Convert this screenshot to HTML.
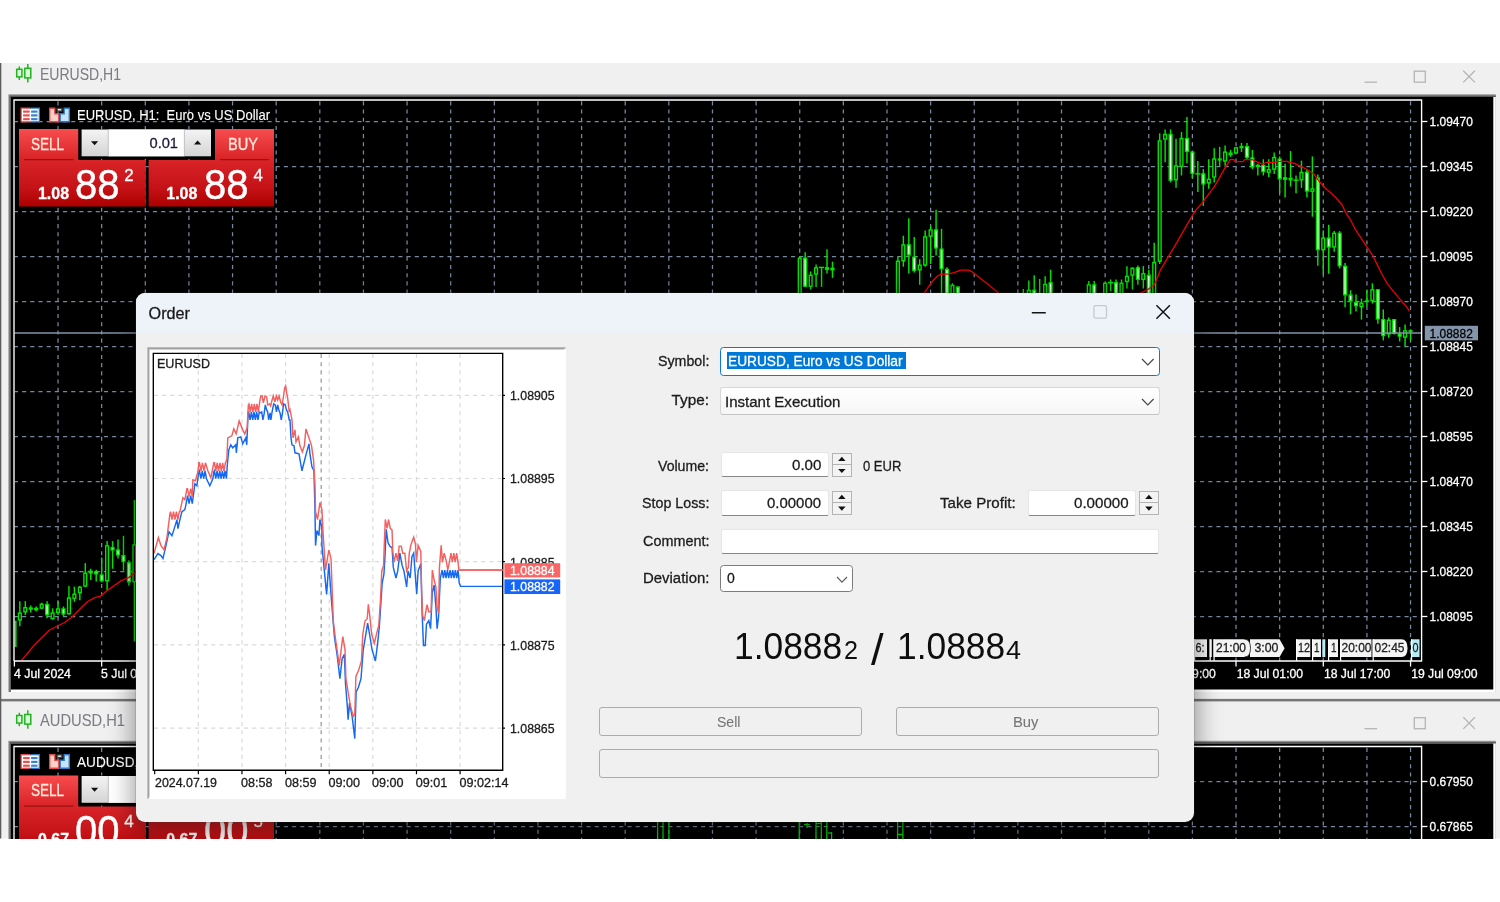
<!DOCTYPE html>
<html lang="en"><head><meta charset="utf-8"><title>Order</title>
<style>
html,body{margin:0;padding:0;background:#fff;}
body{width:1500px;height:902px;position:relative;overflow:hidden;font-family:"Liberation Sans", sans-serif;filter:blur(0.45px);}
svg text{paint-order:stroke;}

.dlg{position:absolute;left:136.1px;top:292.6px;width:1058.4px;height:529.4px;background:#f0f0f0;border-radius:9px;overflow:hidden;box-shadow:0 6px 26px 2px rgba(0,0,0,.42),0 0 0 0.8px rgba(90,90,90,.22);}
.dlg .tb{position:absolute;left:0;top:0;width:100%;height:40.3px;background:#edf3f9;}
.a{position:absolute;box-sizing:border-box;}
.t{position:absolute;white-space:nowrap;line-height:1;transform-origin:0 0;color:#1b1b1b;-webkit-text-stroke:0.3px currentColor;}
.inp{background:#fff;border:1px solid #e6e6e6;border-bottom:1.4px solid #868686;border-radius:2.5px;}
.spn{background:#f3f3f3;border:1.2px solid #b4b4b4;}
.btn{background:#f0f0f0;border:1.9px solid #acacac;border-radius:3px;}

</style></head><body>
<svg width="1500" height="902" viewBox="0 0 1500 902" style="position:absolute;left:0;top:0" font-family='"Liberation Sans", sans-serif'><rect x="0" y="0" width="1500" height="902" fill="#ffffff" /><rect x="0" y="63" width="1500" height="775.5" fill="#f0f0f0" /><rect x="0" y="55.5" width="1500" height="40.5" fill="#f0f0f0" /><line x1="19.3" y1="66.5" x2="19.3" y2="80" stroke="#1fb41f" stroke-width="1.5" /><rect x="16.7" y="69.3" width="5.2" height="7.6" fill="#d8ffd8" stroke="#1fb41f" stroke-width="1.5"/><line x1="27.8" y1="64" x2="27.8" y2="82.5" stroke="#1fb41f" stroke-width="1.5" /><rect x="24.8" y="68.3" width="6" height="9.6" fill="#d8ffd8" stroke="#1fb41f" stroke-width="1.5"/><text x="40" y="80" font-size="16.4" fill="#7c7c84" stroke="#7c7c84" stroke-width="0.05" textLength="81" lengthAdjust="spacingAndGlyphs">EURUSD,H1</text><line x1="1364.5" y1="82.2" x2="1377" y2="82.2" stroke="#b4b4b4" stroke-width="1.3" /><rect x="1414.3" y="71.2" width="11" height="11" fill="none" stroke="#b4b4b4" stroke-width="1.3"/><path d="M1463.3 70.8 l11.6 11.6 M1474.9 70.8 l-11.6 11.6" stroke="#b4b4b4" stroke-width="1.3" fill="none"/><rect x="8.4" y="94.3" width="1487.4" height="597.7" fill="#909090" /><rect x="9.6" y="95.6" width="1486.2" height="596.4" fill="#585858" /><rect x="10.8" y="97" width="1485" height="595" fill="#ffffff" /><rect x="10.8" y="97" width="1482.5" height="592.5" fill="#000000" /><line x1="58.03" y1="100" x2="58.03" y2="661" stroke="#7888a0" stroke-width="1.25" stroke-dasharray="4.09 4.09" stroke-dashoffset="6.83"/><line x1="101.66" y1="100" x2="101.66" y2="661" stroke="#7888a0" stroke-width="1.25" stroke-dasharray="4.09 4.09" stroke-dashoffset="6.83"/><line x1="145.29" y1="100" x2="145.29" y2="661" stroke="#7888a0" stroke-width="1.25" stroke-dasharray="4.09 4.09" stroke-dashoffset="6.83"/><line x1="188.92" y1="100" x2="188.92" y2="661" stroke="#7888a0" stroke-width="1.25" stroke-dasharray="4.09 4.09" stroke-dashoffset="6.83"/><line x1="232.55" y1="100" x2="232.55" y2="661" stroke="#7888a0" stroke-width="1.25" stroke-dasharray="4.09 4.09" stroke-dashoffset="6.83"/><line x1="276.18" y1="100" x2="276.18" y2="661" stroke="#7888a0" stroke-width="1.25" stroke-dasharray="4.09 4.09" stroke-dashoffset="6.83"/><line x1="319.81" y1="100" x2="319.81" y2="661" stroke="#7888a0" stroke-width="1.25" stroke-dasharray="4.09 4.09" stroke-dashoffset="6.83"/><line x1="363.44" y1="100" x2="363.44" y2="661" stroke="#7888a0" stroke-width="1.25" stroke-dasharray="4.09 4.09" stroke-dashoffset="6.83"/><line x1="407.07" y1="100" x2="407.07" y2="661" stroke="#7888a0" stroke-width="1.25" stroke-dasharray="4.09 4.09" stroke-dashoffset="6.83"/><line x1="450.7" y1="100" x2="450.7" y2="661" stroke="#7888a0" stroke-width="1.25" stroke-dasharray="4.09 4.09" stroke-dashoffset="6.83"/><line x1="494.33" y1="100" x2="494.33" y2="661" stroke="#7888a0" stroke-width="1.25" stroke-dasharray="4.09 4.09" stroke-dashoffset="6.83"/><line x1="537.96" y1="100" x2="537.96" y2="661" stroke="#7888a0" stroke-width="1.25" stroke-dasharray="4.09 4.09" stroke-dashoffset="6.83"/><line x1="581.58" y1="100" x2="581.58" y2="661" stroke="#7888a0" stroke-width="1.25" stroke-dasharray="4.09 4.09" stroke-dashoffset="6.83"/><line x1="625.21" y1="100" x2="625.21" y2="661" stroke="#7888a0" stroke-width="1.25" stroke-dasharray="4.09 4.09" stroke-dashoffset="6.83"/><line x1="668.84" y1="100" x2="668.84" y2="661" stroke="#7888a0" stroke-width="1.25" stroke-dasharray="4.09 4.09" stroke-dashoffset="6.83"/><line x1="712.47" y1="100" x2="712.47" y2="661" stroke="#7888a0" stroke-width="1.25" stroke-dasharray="4.09 4.09" stroke-dashoffset="6.83"/><line x1="756.1" y1="100" x2="756.1" y2="661" stroke="#7888a0" stroke-width="1.25" stroke-dasharray="4.09 4.09" stroke-dashoffset="6.83"/><line x1="799.73" y1="100" x2="799.73" y2="661" stroke="#7888a0" stroke-width="1.25" stroke-dasharray="4.09 4.09" stroke-dashoffset="6.83"/><line x1="843.36" y1="100" x2="843.36" y2="661" stroke="#7888a0" stroke-width="1.25" stroke-dasharray="4.09 4.09" stroke-dashoffset="6.83"/><line x1="886.99" y1="100" x2="886.99" y2="661" stroke="#7888a0" stroke-width="1.25" stroke-dasharray="4.09 4.09" stroke-dashoffset="6.83"/><line x1="930.62" y1="100" x2="930.62" y2="661" stroke="#7888a0" stroke-width="1.25" stroke-dasharray="4.09 4.09" stroke-dashoffset="6.83"/><line x1="974.25" y1="100" x2="974.25" y2="661" stroke="#7888a0" stroke-width="1.25" stroke-dasharray="4.09 4.09" stroke-dashoffset="6.83"/><line x1="1017.88" y1="100" x2="1017.88" y2="661" stroke="#7888a0" stroke-width="1.25" stroke-dasharray="4.09 4.09" stroke-dashoffset="6.83"/><line x1="1061.51" y1="100" x2="1061.51" y2="661" stroke="#7888a0" stroke-width="1.25" stroke-dasharray="4.09 4.09" stroke-dashoffset="6.83"/><line x1="1105.14" y1="100" x2="1105.14" y2="661" stroke="#7888a0" stroke-width="1.25" stroke-dasharray="4.09 4.09" stroke-dashoffset="6.83"/><line x1="1148.77" y1="100" x2="1148.77" y2="661" stroke="#7888a0" stroke-width="1.25" stroke-dasharray="4.09 4.09" stroke-dashoffset="6.83"/><line x1="1192.4" y1="100" x2="1192.4" y2="661" stroke="#7888a0" stroke-width="1.25" stroke-dasharray="4.09 4.09" stroke-dashoffset="6.83"/><line x1="1236.03" y1="100" x2="1236.03" y2="661" stroke="#7888a0" stroke-width="1.25" stroke-dasharray="4.09 4.09" stroke-dashoffset="6.83"/><line x1="1279.66" y1="100" x2="1279.66" y2="661" stroke="#7888a0" stroke-width="1.25" stroke-dasharray="4.09 4.09" stroke-dashoffset="6.83"/><line x1="1323.29" y1="100" x2="1323.29" y2="661" stroke="#7888a0" stroke-width="1.25" stroke-dasharray="4.09 4.09" stroke-dashoffset="6.83"/><line x1="1366.92" y1="100" x2="1366.92" y2="661" stroke="#7888a0" stroke-width="1.25" stroke-dasharray="4.09 4.09" stroke-dashoffset="6.83"/><line x1="1410.55" y1="100" x2="1410.55" y2="661" stroke="#7888a0" stroke-width="1.25" stroke-dasharray="4.09 4.09" stroke-dashoffset="6.83"/><line x1="14.6" y1="121.5" x2="1421" y2="121.5" stroke="#7888a0" stroke-width="1.25" stroke-dasharray="4.09 4.09" stroke-dashoffset="0.65"/><line x1="14.6" y1="166.5" x2="1421" y2="166.5" stroke="#7888a0" stroke-width="1.25" stroke-dasharray="4.09 4.09" stroke-dashoffset="0.65"/><line x1="14.6" y1="211.5" x2="1421" y2="211.5" stroke="#7888a0" stroke-width="1.25" stroke-dasharray="4.09 4.09" stroke-dashoffset="0.65"/><line x1="14.6" y1="256.5" x2="1421" y2="256.5" stroke="#7888a0" stroke-width="1.25" stroke-dasharray="4.09 4.09" stroke-dashoffset="0.65"/><line x1="14.6" y1="301.5" x2="1421" y2="301.5" stroke="#7888a0" stroke-width="1.25" stroke-dasharray="4.09 4.09" stroke-dashoffset="0.65"/><line x1="14.6" y1="346.5" x2="1421" y2="346.5" stroke="#7888a0" stroke-width="1.25" stroke-dasharray="4.09 4.09" stroke-dashoffset="0.65"/><line x1="14.6" y1="391.5" x2="1421" y2="391.5" stroke="#7888a0" stroke-width="1.25" stroke-dasharray="4.09 4.09" stroke-dashoffset="0.65"/><line x1="14.6" y1="436.5" x2="1421" y2="436.5" stroke="#7888a0" stroke-width="1.25" stroke-dasharray="4.09 4.09" stroke-dashoffset="0.65"/><line x1="14.6" y1="481.5" x2="1421" y2="481.5" stroke="#7888a0" stroke-width="1.25" stroke-dasharray="4.09 4.09" stroke-dashoffset="0.65"/><line x1="14.6" y1="526.5" x2="1421" y2="526.5" stroke="#7888a0" stroke-width="1.25" stroke-dasharray="4.09 4.09" stroke-dashoffset="0.65"/><line x1="14.6" y1="571.5" x2="1421" y2="571.5" stroke="#7888a0" stroke-width="1.25" stroke-dasharray="4.09 4.09" stroke-dashoffset="0.65"/><line x1="14.6" y1="616.5" x2="1421" y2="616.5" stroke="#7888a0" stroke-width="1.25" stroke-dasharray="4.09 4.09" stroke-dashoffset="0.65"/><rect x="0" y="698.9" width="1500" height="2.5" fill="#767676" /><rect x="0" y="702" width="1500" height="40.5" fill="#f0f0f0" /><line x1="19.3" y1="712.7" x2="19.3" y2="726.2" stroke="#1fb41f" stroke-width="1.5" /><rect x="16.7" y="715.5" width="5.2" height="7.6" fill="#d8ffd8" stroke="#1fb41f" stroke-width="1.5"/><line x1="27.8" y1="710.2" x2="27.8" y2="728.7" stroke="#1fb41f" stroke-width="1.5" /><rect x="24.8" y="714.5" width="6" height="9.6" fill="#d8ffd8" stroke="#1fb41f" stroke-width="1.5"/><text x="40" y="725.8" font-size="16.4" fill="#7c7c84" stroke="#7c7c84" stroke-width="0.05" textLength="85" lengthAdjust="spacingAndGlyphs">AUDUSD,H1</text><line x1="1364.5" y1="728.7" x2="1377" y2="728.7" stroke="#b4b4b4" stroke-width="1.3" /><rect x="1414.3" y="717.7" width="11" height="11" fill="none" stroke="#b4b4b4" stroke-width="1.3"/><path d="M1463.3 717.3 l11.6 11.6 M1474.9 717.3 l-11.6 11.6" stroke="#b4b4b4" stroke-width="1.3" fill="none"/><rect x="8.4" y="740.8" width="1487.4" height="597.7" fill="#909090" /><rect x="9.6" y="742.1" width="1486.2" height="596.4" fill="#585858" /><rect x="10.8" y="743.5" width="1485" height="595" fill="#ffffff" /><rect x="10.8" y="743.5" width="1482.5" height="592.5" fill="#000000" /><line x1="58.03" y1="746.5" x2="58.03" y2="1307.5" stroke="#7888a0" stroke-width="1.25" stroke-dasharray="4.09 4.09" stroke-dashoffset="6.83"/><line x1="101.66" y1="746.5" x2="101.66" y2="1307.5" stroke="#7888a0" stroke-width="1.25" stroke-dasharray="4.09 4.09" stroke-dashoffset="6.83"/><line x1="145.29" y1="746.5" x2="145.29" y2="1307.5" stroke="#7888a0" stroke-width="1.25" stroke-dasharray="4.09 4.09" stroke-dashoffset="6.83"/><line x1="188.92" y1="746.5" x2="188.92" y2="1307.5" stroke="#7888a0" stroke-width="1.25" stroke-dasharray="4.09 4.09" stroke-dashoffset="6.83"/><line x1="232.55" y1="746.5" x2="232.55" y2="1307.5" stroke="#7888a0" stroke-width="1.25" stroke-dasharray="4.09 4.09" stroke-dashoffset="6.83"/><line x1="276.18" y1="746.5" x2="276.18" y2="1307.5" stroke="#7888a0" stroke-width="1.25" stroke-dasharray="4.09 4.09" stroke-dashoffset="6.83"/><line x1="319.81" y1="746.5" x2="319.81" y2="1307.5" stroke="#7888a0" stroke-width="1.25" stroke-dasharray="4.09 4.09" stroke-dashoffset="6.83"/><line x1="363.44" y1="746.5" x2="363.44" y2="1307.5" stroke="#7888a0" stroke-width="1.25" stroke-dasharray="4.09 4.09" stroke-dashoffset="6.83"/><line x1="407.07" y1="746.5" x2="407.07" y2="1307.5" stroke="#7888a0" stroke-width="1.25" stroke-dasharray="4.09 4.09" stroke-dashoffset="6.83"/><line x1="450.7" y1="746.5" x2="450.7" y2="1307.5" stroke="#7888a0" stroke-width="1.25" stroke-dasharray="4.09 4.09" stroke-dashoffset="6.83"/><line x1="494.33" y1="746.5" x2="494.33" y2="1307.5" stroke="#7888a0" stroke-width="1.25" stroke-dasharray="4.09 4.09" stroke-dashoffset="6.83"/><line x1="537.96" y1="746.5" x2="537.96" y2="1307.5" stroke="#7888a0" stroke-width="1.25" stroke-dasharray="4.09 4.09" stroke-dashoffset="6.83"/><line x1="581.58" y1="746.5" x2="581.58" y2="1307.5" stroke="#7888a0" stroke-width="1.25" stroke-dasharray="4.09 4.09" stroke-dashoffset="6.83"/><line x1="625.21" y1="746.5" x2="625.21" y2="1307.5" stroke="#7888a0" stroke-width="1.25" stroke-dasharray="4.09 4.09" stroke-dashoffset="6.83"/><line x1="668.84" y1="746.5" x2="668.84" y2="1307.5" stroke="#7888a0" stroke-width="1.25" stroke-dasharray="4.09 4.09" stroke-dashoffset="6.83"/><line x1="712.47" y1="746.5" x2="712.47" y2="1307.5" stroke="#7888a0" stroke-width="1.25" stroke-dasharray="4.09 4.09" stroke-dashoffset="6.83"/><line x1="756.1" y1="746.5" x2="756.1" y2="1307.5" stroke="#7888a0" stroke-width="1.25" stroke-dasharray="4.09 4.09" stroke-dashoffset="6.83"/><line x1="799.73" y1="746.5" x2="799.73" y2="1307.5" stroke="#7888a0" stroke-width="1.25" stroke-dasharray="4.09 4.09" stroke-dashoffset="6.83"/><line x1="843.36" y1="746.5" x2="843.36" y2="1307.5" stroke="#7888a0" stroke-width="1.25" stroke-dasharray="4.09 4.09" stroke-dashoffset="6.83"/><line x1="886.99" y1="746.5" x2="886.99" y2="1307.5" stroke="#7888a0" stroke-width="1.25" stroke-dasharray="4.09 4.09" stroke-dashoffset="6.83"/><line x1="930.62" y1="746.5" x2="930.62" y2="1307.5" stroke="#7888a0" stroke-width="1.25" stroke-dasharray="4.09 4.09" stroke-dashoffset="6.83"/><line x1="974.25" y1="746.5" x2="974.25" y2="1307.5" stroke="#7888a0" stroke-width="1.25" stroke-dasharray="4.09 4.09" stroke-dashoffset="6.83"/><line x1="1017.88" y1="746.5" x2="1017.88" y2="1307.5" stroke="#7888a0" stroke-width="1.25" stroke-dasharray="4.09 4.09" stroke-dashoffset="6.83"/><line x1="1061.51" y1="746.5" x2="1061.51" y2="1307.5" stroke="#7888a0" stroke-width="1.25" stroke-dasharray="4.09 4.09" stroke-dashoffset="6.83"/><line x1="1105.14" y1="746.5" x2="1105.14" y2="1307.5" stroke="#7888a0" stroke-width="1.25" stroke-dasharray="4.09 4.09" stroke-dashoffset="6.83"/><line x1="1148.77" y1="746.5" x2="1148.77" y2="1307.5" stroke="#7888a0" stroke-width="1.25" stroke-dasharray="4.09 4.09" stroke-dashoffset="6.83"/><line x1="1192.4" y1="746.5" x2="1192.4" y2="1307.5" stroke="#7888a0" stroke-width="1.25" stroke-dasharray="4.09 4.09" stroke-dashoffset="6.83"/><line x1="1236.03" y1="746.5" x2="1236.03" y2="1307.5" stroke="#7888a0" stroke-width="1.25" stroke-dasharray="4.09 4.09" stroke-dashoffset="6.83"/><line x1="1279.66" y1="746.5" x2="1279.66" y2="1307.5" stroke="#7888a0" stroke-width="1.25" stroke-dasharray="4.09 4.09" stroke-dashoffset="6.83"/><line x1="1323.29" y1="746.5" x2="1323.29" y2="1307.5" stroke="#7888a0" stroke-width="1.25" stroke-dasharray="4.09 4.09" stroke-dashoffset="6.83"/><line x1="1366.92" y1="746.5" x2="1366.92" y2="1307.5" stroke="#7888a0" stroke-width="1.25" stroke-dasharray="4.09 4.09" stroke-dashoffset="6.83"/><line x1="1410.55" y1="746.5" x2="1410.55" y2="1307.5" stroke="#7888a0" stroke-width="1.25" stroke-dasharray="4.09 4.09" stroke-dashoffset="6.83"/><line x1="14.6" y1="781.5" x2="1421" y2="781.5" stroke="#7888a0" stroke-width="1.25" stroke-dasharray="4.09 4.09" stroke-dashoffset="0.65"/><line x1="14.6" y1="826.5" x2="1421" y2="826.5" stroke="#7888a0" stroke-width="1.25" stroke-dasharray="4.09 4.09" stroke-dashoffset="0.65"/><g><rect x="14.6" y="620.6" width="2" height="26.4" fill="#00e400" /><line x1="19.85" y1="601.17" x2="19.85" y2="626.22" stroke="#00e400" stroke-width="1.45" /><rect x="18.45" y="613.12" width="2.8" height="6.8" fill="#000000" stroke="#00e400" stroke-width="1.4"/><line x1="25.31" y1="601.17" x2="25.31" y2="614.92" stroke="#00e400" stroke-width="1.45" /><rect x="23.91" y="607.66" width="2.8" height="4.16" fill="#000000" stroke="#00e400" stroke-width="1.4"/><line x1="30.76" y1="605.5" x2="30.76" y2="612.47" stroke="#00e400" stroke-width="1.45" /><rect x="29.36" y="608.04" width="2.8" height="0.96" fill="#eaffea" stroke="#00e400" stroke-width="1.4"/><line x1="36.21" y1="606.44" x2="36.21" y2="611.53" stroke="#00e400" stroke-width="1.45" /><rect x="34.81" y="608.41" width="2.8" height="1.15" fill="#eaffea" stroke="#00e400" stroke-width="1.4"/><line x1="41.67" y1="602.68" x2="41.67" y2="609.27" stroke="#00e400" stroke-width="1.45" /><rect x="40.27" y="604.27" width="2.8" height="3.79" fill="#000000" stroke="#00e400" stroke-width="1.4"/><line x1="47.12" y1="601.17" x2="47.12" y2="618.31" stroke="#00e400" stroke-width="1.45" /><rect x="45.72" y="604.64" width="2.8" height="10" fill="#eaffea" stroke="#00e400" stroke-width="1.4"/><line x1="52.58" y1="608.33" x2="52.58" y2="619.63" stroke="#00e400" stroke-width="1.45" /><rect x="51.18" y="613.12" width="2.8" height="5.48" fill="#000000" stroke="#00e400" stroke-width="1.4"/><line x1="58.03" y1="601.17" x2="58.03" y2="614.92" stroke="#00e400" stroke-width="1.45" /><rect x="56.63" y="608.98" width="2.8" height="3.41" fill="#000000" stroke="#00e400" stroke-width="1.4"/><line x1="63.48" y1="606.44" x2="63.48" y2="616.43" stroke="#00e400" stroke-width="1.45" /><rect x="62.08" y="608.98" width="2.8" height="4.92" fill="#eaffea" stroke="#00e400" stroke-width="1.4"/><line x1="68.94" y1="586.1" x2="68.94" y2="614.54" stroke="#00e400" stroke-width="1.45" /><rect x="67.54" y="598.05" width="2.8" height="15.66" fill="#000000" stroke="#00e400" stroke-width="1.4"/><line x1="74.39" y1="586.66" x2="74.39" y2="601.73" stroke="#00e400" stroke-width="1.45" /><rect x="72.99" y="594.28" width="2.8" height="3.98" fill="#000000" stroke="#00e400" stroke-width="1.4"/><line x1="79.84" y1="586.1" x2="79.84" y2="600.23" stroke="#00e400" stroke-width="1.45" /><rect x="78.44" y="587.31" width="2.8" height="5.29" fill="#000000" stroke="#00e400" stroke-width="1.4"/><line x1="85.3" y1="563.11" x2="85.3" y2="587.04" stroke="#00e400" stroke-width="1.45" /><rect x="83.9" y="573.18" width="2.8" height="12.83" fill="#000000" stroke="#00e400" stroke-width="1.4"/><line x1="90.75" y1="568.76" x2="90.75" y2="580.07" stroke="#00e400" stroke-width="1.45" /><rect x="89.35" y="571.3" width="2.8" height="1.53" fill="#eaffea" stroke="#00e400" stroke-width="1.4"/><line x1="96.21" y1="569.71" x2="96.21" y2="581.39" stroke="#00e400" stroke-width="1.45" /><rect x="94.81" y="571.86" width="2.8" height="1.9" fill="#eaffea" stroke="#00e400" stroke-width="1.4"/><line x1="101.66" y1="557.46" x2="101.66" y2="582.33" stroke="#00e400" stroke-width="1.45" /><rect x="100.26" y="575.07" width="2.8" height="5.67" fill="#eaffea" stroke="#00e400" stroke-width="1.4"/><line x1="107.11" y1="541.07" x2="107.11" y2="590.43" stroke="#00e400" stroke-width="1.45" /><rect x="105.71" y="545.86" width="2.8" height="34.87" fill="#000000" stroke="#00e400" stroke-width="1.4"/><line x1="112.57" y1="541.07" x2="112.57" y2="568.76" stroke="#00e400" stroke-width="1.45" /><rect x="111.17" y="547.75" width="2.8" height="2.09" fill="#eaffea" stroke="#00e400" stroke-width="1.4"/><line x1="118.02" y1="539.56" x2="118.02" y2="558.4" stroke="#00e400" stroke-width="1.45" /><rect x="116.62" y="550.01" width="2.8" height="4.92" fill="#eaffea" stroke="#00e400" stroke-width="1.4"/><line x1="123.47" y1="535.8" x2="123.47" y2="570.65" stroke="#00e400" stroke-width="1.45" /><rect x="122.07" y="555.66" width="2.8" height="5.86" fill="#eaffea" stroke="#00e400" stroke-width="1.4"/><line x1="128.93" y1="560.29" x2="128.93" y2="585.72" stroke="#00e400" stroke-width="1.45" /><rect x="127.53" y="562.82" width="2.8" height="18.86" fill="#eaffea" stroke="#00e400" stroke-width="1.4"/><line x1="134.38" y1="500" x2="134.38" y2="641.3" stroke="#00e400" stroke-width="1.45" /><rect x="132.98" y="544.92" width="2.8" height="36.76" fill="#000000" stroke="#00e400" stroke-width="1.4"/><line x1="799.73" y1="256" x2="799.73" y2="680" stroke="#00e400" stroke-width="1.45" /><rect x="798.33" y="258.25" width="2.8" height="421.1" fill="#000000" stroke="#00e400" stroke-width="1.4"/><line x1="805.19" y1="252.27" x2="805.19" y2="286.93" stroke="#00e400" stroke-width="1.45" /><rect x="803.79" y="258.25" width="2.8" height="28.03" fill="#eaffea" stroke="#00e400" stroke-width="1.4"/><line x1="810.64" y1="271.47" x2="810.64" y2="289.6" stroke="#00e400" stroke-width="1.45" /><rect x="809.24" y="275.32" width="2.8" height="10.97" fill="#000000" stroke="#00e400" stroke-width="1.4"/><line x1="816.09" y1="264.53" x2="816.09" y2="286.93" stroke="#00e400" stroke-width="1.45" /><rect x="814.69" y="267.85" width="2.8" height="6.17" fill="#000000" stroke="#00e400" stroke-width="1.4"/><line x1="821.55" y1="267.41" x2="821.55" y2="286.93" stroke="#00e400" stroke-width="1.45" /><line x1="818.95" y1="267.41" x2="824.15" y2="267.41" stroke="#00e400" stroke-width="1.45" /><line x1="827" y1="249.28" x2="827" y2="273.6" stroke="#00e400" stroke-width="1.45" /><rect x="825.6" y="267.85" width="2.8" height="1.37" fill="#eaffea" stroke="#00e400" stroke-width="1.4"/><line x1="832.46" y1="261.65" x2="832.46" y2="277.87" stroke="#00e400" stroke-width="1.45" /><rect x="831.06" y="268.38" width="2.8" height="1.37" fill="#eaffea" stroke="#00e400" stroke-width="1.4"/><line x1="897.9" y1="256.53" x2="897.9" y2="680" stroke="#00e400" stroke-width="1.45" /><rect x="896.5" y="261.24" width="2.8" height="418.11" fill="#000000" stroke="#00e400" stroke-width="1.4"/><line x1="903.35" y1="235.73" x2="903.35" y2="266.67" stroke="#00e400" stroke-width="1.45" /><rect x="901.95" y="244.92" width="2.8" height="15.77" fill="#000000" stroke="#00e400" stroke-width="1.4"/><line x1="908.81" y1="218.13" x2="908.81" y2="273.6" stroke="#00e400" stroke-width="1.45" /><rect x="907.41" y="244.92" width="2.8" height="9.9" fill="#eaffea" stroke="#00e400" stroke-width="1.4"/><line x1="914.26" y1="237.12" x2="914.26" y2="272.53" stroke="#00e400" stroke-width="1.45" /><rect x="912.86" y="257.18" width="2.8" height="13.1" fill="#eaffea" stroke="#00e400" stroke-width="1.4"/><line x1="919.71" y1="259.2" x2="919.71" y2="284.8" stroke="#00e400" stroke-width="1.45" /><rect x="918.31" y="265.18" width="2.8" height="4.57" fill="#000000" stroke="#00e400" stroke-width="1.4"/><line x1="925.17" y1="230.4" x2="925.17" y2="266.67" stroke="#00e400" stroke-width="1.45" /><rect x="923.77" y="236.92" width="2.8" height="28.03" fill="#000000" stroke="#00e400" stroke-width="1.4"/><line x1="930.62" y1="226.13" x2="930.62" y2="264" stroke="#00e400" stroke-width="1.45" /><rect x="929.22" y="229.98" width="2.8" height="6.17" fill="#000000" stroke="#00e400" stroke-width="1.4"/><line x1="936.08" y1="209.81" x2="936.08" y2="255.47" stroke="#00e400" stroke-width="1.45" /><rect x="934.68" y="229.98" width="2.8" height="17.9" fill="#eaffea" stroke="#00e400" stroke-width="1.4"/><line x1="941.53" y1="228.8" x2="941.53" y2="328" stroke="#00e400" stroke-width="1.45" /><rect x="940.13" y="249.18" width="2.8" height="19.5" fill="#eaffea" stroke="#00e400" stroke-width="1.4"/><line x1="946.98" y1="267.2" x2="946.98" y2="680" stroke="#00e400" stroke-width="1.45" /><rect x="945.58" y="269.45" width="2.8" height="409.9" fill="#eaffea" stroke="#00e400" stroke-width="1.4"/><line x1="952.44" y1="283.2" x2="952.44" y2="680" stroke="#00e400" stroke-width="1.45" /><rect x="951.04" y="285.45" width="2.8" height="393.9" fill="#000000" stroke="#00e400" stroke-width="1.4"/><line x1="957.89" y1="286.4" x2="957.89" y2="680" stroke="#00e400" stroke-width="1.45" /><rect x="956.49" y="287.05" width="2.8" height="392.3" fill="#eaffea" stroke="#00e400" stroke-width="1.4"/><line x1="1023.33" y1="289.07" x2="1023.33" y2="680" stroke="#00e400" stroke-width="1.45" /><rect x="1021.93" y="296.65" width="2.8" height="382.7" fill="#000000" stroke="#00e400" stroke-width="1.4"/><line x1="1028.79" y1="280.53" x2="1028.79" y2="680" stroke="#00e400" stroke-width="1.45" /><rect x="1027.39" y="290.25" width="2.8" height="389.1" fill="#000000" stroke="#00e400" stroke-width="1.4"/><line x1="1034.24" y1="275.2" x2="1034.24" y2="680" stroke="#00e400" stroke-width="1.45" /><rect x="1032.84" y="290.25" width="2.8" height="389.1" fill="#eaffea" stroke="#00e400" stroke-width="1.4"/><line x1="1039.7" y1="278.93" x2="1039.7" y2="680" stroke="#00e400" stroke-width="1.45" /><line x1="1037.1" y1="360" x2="1042.3" y2="360" stroke="#00e400" stroke-width="1.45" /><line x1="1045.15" y1="276.27" x2="1045.15" y2="680" stroke="#00e400" stroke-width="1.45" /><rect x="1043.75" y="284.38" width="2.8" height="394.97" fill="#000000" stroke="#00e400" stroke-width="1.4"/><line x1="1050.6" y1="269.87" x2="1050.6" y2="680" stroke="#00e400" stroke-width="1.45" /><rect x="1049.2" y="282.78" width="2.8" height="396.57" fill="#eaffea" stroke="#00e400" stroke-width="1.4"/><line x1="1088.78" y1="281.07" x2="1088.78" y2="680" stroke="#00e400" stroke-width="1.45" /><rect x="1087.38" y="284.92" width="2.8" height="394.43" fill="#000000" stroke="#00e400" stroke-width="1.4"/><line x1="1094.23" y1="281.07" x2="1094.23" y2="680" stroke="#00e400" stroke-width="1.45" /><rect x="1092.83" y="284.92" width="2.8" height="394.43" fill="#eaffea" stroke="#00e400" stroke-width="1.4"/><line x1="1105.14" y1="282.67" x2="1105.14" y2="680" stroke="#00e400" stroke-width="1.45" /><rect x="1103.74" y="283.32" width="2.8" height="396.03" fill="#000000" stroke="#00e400" stroke-width="1.4"/><line x1="1110.59" y1="279.47" x2="1110.59" y2="291.2" stroke="#00e400" stroke-width="1.45" /><line x1="1107.99" y1="282.67" x2="1113.19" y2="282.67" stroke="#00e400" stroke-width="1.45" /><line x1="1116.05" y1="279.47" x2="1116.05" y2="680" stroke="#00e400" stroke-width="1.45" /><rect x="1114.65" y="282.78" width="2.8" height="396.57" fill="#eaffea" stroke="#00e400" stroke-width="1.4"/><line x1="1121.5" y1="279.47" x2="1121.5" y2="680" stroke="#00e400" stroke-width="1.45" /><rect x="1120.1" y="283.32" width="2.8" height="396.03" fill="#000000" stroke="#00e400" stroke-width="1.4"/><line x1="1126.95" y1="266.13" x2="1126.95" y2="288.53" stroke="#00e400" stroke-width="1.45" /><rect x="1125.55" y="276.38" width="2.8" height="5.1" fill="#000000" stroke="#00e400" stroke-width="1.4"/><line x1="1132.41" y1="267.2" x2="1132.41" y2="289.6" stroke="#00e400" stroke-width="1.45" /><rect x="1131.01" y="268.38" width="2.8" height="6.7" fill="#000000" stroke="#00e400" stroke-width="1.4"/><line x1="1137.86" y1="265.6" x2="1137.86" y2="284.8" stroke="#00e400" stroke-width="1.45" /><rect x="1136.46" y="267.85" width="2.8" height="11.5" fill="#eaffea" stroke="#00e400" stroke-width="1.4"/><line x1="1143.32" y1="266.13" x2="1143.32" y2="288.53" stroke="#00e400" stroke-width="1.45" /><rect x="1141.92" y="273.72" width="2.8" height="5.63" fill="#000000" stroke="#00e400" stroke-width="1.4"/><line x1="1148.77" y1="269.87" x2="1148.77" y2="680" stroke="#00e400" stroke-width="1.45" /><rect x="1147.37" y="275.32" width="2.8" height="404.03" fill="#eaffea" stroke="#00e400" stroke-width="1.4"/><line x1="1154.22" y1="242.67" x2="1154.22" y2="680" stroke="#00e400" stroke-width="1.45" /><rect x="1152.82" y="262.52" width="2.8" height="416.83" fill="#000000" stroke="#00e400" stroke-width="1.4"/><line x1="1159.68" y1="133.33" x2="1159.68" y2="264" stroke="#00e400" stroke-width="1.45" /><rect x="1158.28" y="140.92" width="2.8" height="120.3" fill="#000000" stroke="#00e400" stroke-width="1.4"/><line x1="1165.13" y1="129.39" x2="1165.13" y2="162.13" stroke="#00e400" stroke-width="1.45" /><rect x="1163.73" y="134.52" width="2.8" height="4.57" fill="#000000" stroke="#00e400" stroke-width="1.4"/><line x1="1170.58" y1="129.39" x2="1170.58" y2="182.4" stroke="#00e400" stroke-width="1.45" /><rect x="1169.18" y="134.52" width="2.8" height="45.63" fill="#eaffea" stroke="#00e400" stroke-width="1.4"/><line x1="1176.04" y1="138.67" x2="1176.04" y2="187.73" stroke="#00e400" stroke-width="1.45" /><rect x="1174.64" y="165.98" width="2.8" height="13.63" fill="#000000" stroke="#00e400" stroke-width="1.4"/><line x1="1181.49" y1="131.95" x2="1181.49" y2="175.47" stroke="#00e400" stroke-width="1.45" /><rect x="1180.09" y="138.57" width="2.8" height="27.71" fill="#000000" stroke="#00e400" stroke-width="1.4"/><line x1="1186.95" y1="117.01" x2="1186.95" y2="163.2" stroke="#00e400" stroke-width="1.45" /><rect x="1185.55" y="138.57" width="2.8" height="12.78" fill="#eaffea" stroke="#00e400" stroke-width="1.4"/><line x1="1192.4" y1="150.93" x2="1192.4" y2="178.13" stroke="#00e400" stroke-width="1.45" /><rect x="1191" y="152.12" width="2.8" height="21.1" fill="#eaffea" stroke="#00e400" stroke-width="1.4"/><line x1="1197.85" y1="161.07" x2="1197.85" y2="192" stroke="#00e400" stroke-width="1.45" /><line x1="1195.25" y1="173.87" x2="1200.45" y2="173.87" stroke="#00e400" stroke-width="1.45" /><line x1="1203.31" y1="169.07" x2="1203.31" y2="205.87" stroke="#00e400" stroke-width="1.45" /><rect x="1201.91" y="173.98" width="2.8" height="9.9" fill="#eaffea" stroke="#00e400" stroke-width="1.4"/><line x1="1208.76" y1="159.25" x2="1208.76" y2="188.8" stroke="#00e400" stroke-width="1.45" /><rect x="1207.36" y="179.32" width="2.8" height="3.5" fill="#000000" stroke="#00e400" stroke-width="1.4"/><line x1="1214.21" y1="148.27" x2="1214.21" y2="182.4" stroke="#00e400" stroke-width="1.45" /><rect x="1212.81" y="159.05" width="2.8" height="17.9" fill="#000000" stroke="#00e400" stroke-width="1.4"/><line x1="1219.67" y1="146.88" x2="1219.67" y2="165.87" stroke="#00e400" stroke-width="1.45" /><rect x="1218.27" y="159.05" width="2.8" height="0.83" fill="#eaffea" stroke="#00e400" stroke-width="1.4"/><line x1="1225.12" y1="145.6" x2="1225.12" y2="165.87" stroke="#00e400" stroke-width="1.45" /><rect x="1223.72" y="152.12" width="2.8" height="8.83" fill="#000000" stroke="#00e400" stroke-width="1.4"/><line x1="1230.58" y1="149.87" x2="1230.58" y2="156.8" stroke="#00e400" stroke-width="1.45" /><rect x="1229.18" y="153.18" width="2.8" height="1.37" fill="#eaffea" stroke="#00e400" stroke-width="1.4"/><line x1="1236.03" y1="147.2" x2="1236.03" y2="153.6" stroke="#00e400" stroke-width="1.45" /><rect x="1234.63" y="147.85" width="2.8" height="5.1" fill="#000000" stroke="#00e400" stroke-width="1.4"/><line x1="1241.48" y1="142.93" x2="1241.48" y2="152" stroke="#00e400" stroke-width="1.45" /><rect x="1240.08" y="146.78" width="2.8" height="0.83" fill="#eaffea" stroke="#00e400" stroke-width="1.4"/><line x1="1246.94" y1="142.93" x2="1246.94" y2="158.93" stroke="#00e400" stroke-width="1.45" /><rect x="1245.54" y="146.78" width="2.8" height="10.43" fill="#eaffea" stroke="#00e400" stroke-width="1.4"/><line x1="1252.39" y1="149.87" x2="1252.39" y2="169.07" stroke="#00e400" stroke-width="1.45" /><rect x="1250.99" y="157.98" width="2.8" height="8.83" fill="#eaffea" stroke="#00e400" stroke-width="1.4"/><line x1="1257.84" y1="163.73" x2="1257.84" y2="175.47" stroke="#00e400" stroke-width="1.45" /><rect x="1256.44" y="165.45" width="2.8" height="0.83" fill="#eaffea" stroke="#00e400" stroke-width="1.4"/><line x1="1263.3" y1="159.25" x2="1263.3" y2="175.47" stroke="#00e400" stroke-width="1.45" /><rect x="1261.9" y="165.45" width="2.8" height="6.17" fill="#eaffea" stroke="#00e400" stroke-width="1.4"/><line x1="1268.75" y1="159.25" x2="1268.75" y2="177.07" stroke="#00e400" stroke-width="1.45" /><rect x="1267.35" y="169.72" width="2.8" height="2.43" fill="#000000" stroke="#00e400" stroke-width="1.4"/><line x1="1274.2" y1="152.45" x2="1274.2" y2="174" stroke="#00e400" stroke-width="1.45" /><rect x="1272.8" y="157.58" width="2.8" height="11.5" fill="#000000" stroke="#00e400" stroke-width="1.4"/><line x1="1279.66" y1="156.4" x2="1279.66" y2="192.67" stroke="#00e400" stroke-width="1.45" /><rect x="1278.26" y="159.18" width="2.8" height="19.5" fill="#eaffea" stroke="#00e400" stroke-width="1.4"/><line x1="1285.11" y1="163.87" x2="1285.11" y2="197.47" stroke="#00e400" stroke-width="1.45" /><rect x="1283.71" y="177.85" width="2.8" height="1.37" fill="#eaffea" stroke="#00e400" stroke-width="1.4"/><line x1="1290.57" y1="151.07" x2="1290.57" y2="186.59" stroke="#00e400" stroke-width="1.45" /><rect x="1289.17" y="178.38" width="2.8" height="1.37" fill="#eaffea" stroke="#00e400" stroke-width="1.4"/><line x1="1296.02" y1="175.6" x2="1296.02" y2="193.2" stroke="#00e400" stroke-width="1.45" /><line x1="1293.42" y1="180.19" x2="1298.62" y2="180.19" stroke="#00e400" stroke-width="1.45" /><line x1="1301.47" y1="160.67" x2="1301.47" y2="187.87" stroke="#00e400" stroke-width="1.45" /><rect x="1300.07" y="172.52" width="2.8" height="7.23" fill="#000000" stroke="#00e400" stroke-width="1.4"/><line x1="1306.93" y1="169.73" x2="1306.93" y2="197.47" stroke="#00e400" stroke-width="1.45" /><rect x="1305.53" y="172.3" width="2.8" height="18.65" fill="#eaffea" stroke="#00e400" stroke-width="1.4"/><line x1="1312.38" y1="156.4" x2="1312.38" y2="216.67" stroke="#00e400" stroke-width="1.45" /><rect x="1310.98" y="189.05" width="2.8" height="2.22" fill="#000000" stroke="#00e400" stroke-width="1.4"/><line x1="1317.83" y1="174.53" x2="1317.83" y2="265.73" stroke="#00e400" stroke-width="1.45" /><rect x="1316.43" y="178.06" width="2.8" height="71.55" fill="#eaffea" stroke="#00e400" stroke-width="1.4"/><line x1="1323.29" y1="230.32" x2="1323.29" y2="274.27" stroke="#00e400" stroke-width="1.45" /><rect x="1321.89" y="238.12" width="2.8" height="11.5" fill="#000000" stroke="#00e400" stroke-width="1.4"/><line x1="1328.74" y1="224.67" x2="1328.74" y2="273.73" stroke="#00e400" stroke-width="1.45" /><rect x="1327.34" y="238.12" width="2.8" height="8.83" fill="#eaffea" stroke="#00e400" stroke-width="1.4"/><line x1="1334.2" y1="231.07" x2="1334.2" y2="251.87" stroke="#00e400" stroke-width="1.45" /><rect x="1332.8" y="233.32" width="2.8" height="13.63" fill="#000000" stroke="#00e400" stroke-width="1.4"/><line x1="1339.65" y1="231.07" x2="1339.65" y2="268.4" stroke="#00e400" stroke-width="1.45" /><rect x="1338.25" y="233.32" width="2.8" height="32.3" fill="#eaffea" stroke="#00e400" stroke-width="1.4"/><line x1="1345.1" y1="263.07" x2="1345.1" y2="307.33" stroke="#00e400" stroke-width="1.45" /><rect x="1343.7" y="266.38" width="2.8" height="28.35" fill="#eaffea" stroke="#00e400" stroke-width="1.4"/><line x1="1350.56" y1="290.27" x2="1350.56" y2="314.27" stroke="#00e400" stroke-width="1.45" /><rect x="1349.16" y="295.18" width="2.8" height="5.63" fill="#eaffea" stroke="#00e400" stroke-width="1.4"/><line x1="1356.01" y1="294.53" x2="1356.01" y2="311.6" stroke="#00e400" stroke-width="1.45" /><rect x="1354.61" y="302.65" width="2.8" height="2.97" fill="#eaffea" stroke="#00e400" stroke-width="1.4"/><line x1="1361.46" y1="298.59" x2="1361.46" y2="319.6" stroke="#00e400" stroke-width="1.45" /><rect x="1360.06" y="303.18" width="2.8" height="3.5" fill="#000000" stroke="#00e400" stroke-width="1.4"/><line x1="1366.92" y1="290.27" x2="1366.92" y2="306.27" stroke="#00e400" stroke-width="1.45" /><rect x="1365.52" y="301.05" width="2.8" height="0.3" fill="#eaffea" stroke="#00e400" stroke-width="1.4"/><line x1="1372.37" y1="283.33" x2="1372.37" y2="303.6" stroke="#00e400" stroke-width="1.45" /><rect x="1370.97" y="289.85" width="2.8" height="10.43" fill="#000000" stroke="#00e400" stroke-width="1.4"/><line x1="1377.83" y1="289.2" x2="1377.83" y2="323.87" stroke="#00e400" stroke-width="1.45" /><rect x="1376.43" y="289.85" width="2.8" height="29.1" fill="#eaffea" stroke="#00e400" stroke-width="1.4"/><line x1="1383.28" y1="309.47" x2="1383.28" y2="340.4" stroke="#00e400" stroke-width="1.45" /><rect x="1381.88" y="319.72" width="2.8" height="15.77" fill="#eaffea" stroke="#00e400" stroke-width="1.4"/><line x1="1388.73" y1="317.47" x2="1388.73" y2="337.73" stroke="#00e400" stroke-width="1.45" /><rect x="1387.33" y="320.25" width="2.8" height="13.63" fill="#000000" stroke="#00e400" stroke-width="1.4"/><line x1="1394.19" y1="319.07" x2="1394.19" y2="334.53" stroke="#00e400" stroke-width="1.45" /><rect x="1392.79" y="319.72" width="2.8" height="13.63" fill="#eaffea" stroke="#00e400" stroke-width="1.4"/><line x1="1399.64" y1="327.07" x2="1399.64" y2="341.47" stroke="#00e400" stroke-width="1.45" /><rect x="1398.24" y="334.12" width="2.8" height="1.9" fill="#eaffea" stroke="#00e400" stroke-width="1.4"/><line x1="1405.09" y1="324.4" x2="1405.09" y2="346.8" stroke="#00e400" stroke-width="1.45" /><rect x="1403.69" y="330.92" width="2.8" height="6.17" fill="#000000" stroke="#00e400" stroke-width="1.4"/><line x1="1410.55" y1="329.2" x2="1410.55" y2="340.4" stroke="#00e400" stroke-width="1.45" /><rect x="1409.15" y="330.92" width="2.8" height="0.3" fill="#eaffea" stroke="#00e400" stroke-width="1.4"/><polyline points="21.68,660.14 33.55,646.01 49.56,629.99 64.63,622.46 72.17,616.8 87.24,601.73 94.78,597.59 100.43,596.08 107.97,590.05 121.15,580.63 128.69,577.62 135.28,572.53 141.88,567.82" fill="none" stroke="#ec0000" stroke-width="1.3" stroke-linejoin="round"/><polyline points="918.67,302.4 924.53,292.8 929.33,285.33 933.6,280 937.87,275.73 939.2,275.2 941.33,274.13 947.73,274.13 954.13,272.53 960.53,270.19 968.53,270.19 972.27,272 981.87,279.47 992.53,288 997.87,292.59 1005.33,300.27" fill="none" stroke="#ec0000" stroke-width="1.3" stroke-linejoin="round"/><polyline points="1134.67,296 1141.6,292.59 1148.53,289.07 1153.87,285.33 1156,281.07 1160.27,270.4 1167.73,257.6 1177.33,241.6 1188,222.93 1195.47,210.67 1202.93,202.13 1205.07,198.93 1214.67,186.13 1224.27,169.07 1230.13,159.68 1233.87,159.68 1234.93,161.6 1242.93,161.6 1244.53,159.68 1252,159.68 1257.33,162.13 1262.67,164.27 1265.87,162.45 1275.47,162.45 1277.6,161.39 1287.73,161.39 1289.33,162.45 1293.6,163.2 1300,165.87 1307.33,169.73 1313.73,174 1320.13,182.53 1326.53,189.47 1330.8,192.67 1336.67,198.53 1342.53,205.47 1344.67,210.8 1351.07,220.93 1355.33,229.47 1363.87,242.27 1372.4,255.07 1376.67,263.6 1382,274.27 1387.33,283.87 1396.93,295.6 1406.53,306.8 1409.52,311.07" fill="none" stroke="#ec0000" stroke-width="1.3" stroke-linejoin="round"/></g><line x1="657.6" y1="821" x2="657.6" y2="839" stroke="#00d800" stroke-width="1.3" /><line x1="663" y1="821" x2="663" y2="839" stroke="#00d800" stroke-width="1.3" /><line x1="668.9" y1="821" x2="668.9" y2="839" stroke="#00d800" stroke-width="1.3" /><line x1="799.2" y1="821" x2="799.2" y2="839" stroke="#00d800" stroke-width="1.3" /><line x1="816" y1="821" x2="816" y2="839" stroke="#00d800" stroke-width="1.3" /><line x1="821.3" y1="821" x2="821.3" y2="839" stroke="#00d800" stroke-width="1.3" /><line x1="826.8" y1="821" x2="826.8" y2="839" stroke="#00d800" stroke-width="1.3" /><line x1="897.6" y1="821" x2="897.6" y2="839" stroke="#00d800" stroke-width="1.3" /><line x1="902.9" y1="821" x2="902.9" y2="839" stroke="#00d800" stroke-width="1.3" /><line x1="804" y1="824.5" x2="810" y2="824.5" stroke="#00d800" stroke-width="1.3" /><line x1="807" y1="823" x2="807" y2="828" stroke="#00d800" stroke-width="1.3" /><line x1="816" y1="823.5" x2="821.3" y2="823.5" stroke="#00d800" stroke-width="1.3" /><line x1="831.6" y1="832" x2="831.6" y2="839" stroke="#00d800" stroke-width="1.3" /><line x1="828" y1="833" x2="831.6" y2="833" stroke="#00d800" stroke-width="1.3" /><line x1="897.6" y1="834.5" x2="902.9" y2="834.5" stroke="#00d800" stroke-width="1.3" /><line x1="14.6" y1="333" x2="1421" y2="333" stroke="#8494a8" stroke-width="1.3" /><path d="M14 661 V100 H1421.6 V661 H14" fill="none" stroke="#ffffff" stroke-width="1.35"/><line x1="1421.6" y1="121.5" x2="1427.4" y2="121.5" stroke="#ffffff" stroke-width="1.3" /><text x="1429.6" y="126.2" font-size="12.9" fill="#ffffff" stroke="#ffffff" stroke-width="0.3" textLength="43.2" lengthAdjust="spacingAndGlyphs">1.09470</text><line x1="1421.6" y1="166.5" x2="1427.4" y2="166.5" stroke="#ffffff" stroke-width="1.3" /><text x="1429.6" y="171.2" font-size="12.9" fill="#ffffff" stroke="#ffffff" stroke-width="0.3" textLength="43.2" lengthAdjust="spacingAndGlyphs">1.09345</text><line x1="1421.6" y1="211.5" x2="1427.4" y2="211.5" stroke="#ffffff" stroke-width="1.3" /><text x="1429.6" y="216.2" font-size="12.9" fill="#ffffff" stroke="#ffffff" stroke-width="0.3" textLength="43.2" lengthAdjust="spacingAndGlyphs">1.09220</text><line x1="1421.6" y1="256.5" x2="1427.4" y2="256.5" stroke="#ffffff" stroke-width="1.3" /><text x="1429.6" y="261.2" font-size="12.9" fill="#ffffff" stroke="#ffffff" stroke-width="0.3" textLength="43.2" lengthAdjust="spacingAndGlyphs">1.09095</text><line x1="1421.6" y1="301.5" x2="1427.4" y2="301.5" stroke="#ffffff" stroke-width="1.3" /><text x="1429.6" y="306.2" font-size="12.9" fill="#ffffff" stroke="#ffffff" stroke-width="0.3" textLength="43.2" lengthAdjust="spacingAndGlyphs">1.08970</text><line x1="1421.6" y1="346.5" x2="1427.4" y2="346.5" stroke="#ffffff" stroke-width="1.3" /><text x="1429.6" y="351.2" font-size="12.9" fill="#ffffff" stroke="#ffffff" stroke-width="0.3" textLength="43.2" lengthAdjust="spacingAndGlyphs">1.08845</text><line x1="1421.6" y1="391.5" x2="1427.4" y2="391.5" stroke="#ffffff" stroke-width="1.3" /><text x="1429.6" y="396.2" font-size="12.9" fill="#ffffff" stroke="#ffffff" stroke-width="0.3" textLength="43.2" lengthAdjust="spacingAndGlyphs">1.08720</text><line x1="1421.6" y1="436.5" x2="1427.4" y2="436.5" stroke="#ffffff" stroke-width="1.3" /><text x="1429.6" y="441.2" font-size="12.9" fill="#ffffff" stroke="#ffffff" stroke-width="0.3" textLength="43.2" lengthAdjust="spacingAndGlyphs">1.08595</text><line x1="1421.6" y1="481.5" x2="1427.4" y2="481.5" stroke="#ffffff" stroke-width="1.3" /><text x="1429.6" y="486.2" font-size="12.9" fill="#ffffff" stroke="#ffffff" stroke-width="0.3" textLength="43.2" lengthAdjust="spacingAndGlyphs">1.08470</text><line x1="1421.6" y1="526.5" x2="1427.4" y2="526.5" stroke="#ffffff" stroke-width="1.3" /><text x="1429.6" y="531.2" font-size="12.9" fill="#ffffff" stroke="#ffffff" stroke-width="0.3" textLength="43.2" lengthAdjust="spacingAndGlyphs">1.08345</text><line x1="1421.6" y1="571.5" x2="1427.4" y2="571.5" stroke="#ffffff" stroke-width="1.3" /><text x="1429.6" y="576.2" font-size="12.9" fill="#ffffff" stroke="#ffffff" stroke-width="0.3" textLength="43.2" lengthAdjust="spacingAndGlyphs">1.08220</text><line x1="1421.6" y1="616.5" x2="1427.4" y2="616.5" stroke="#ffffff" stroke-width="1.3" /><text x="1429.6" y="621.2" font-size="12.9" fill="#ffffff" stroke="#ffffff" stroke-width="0.3" textLength="43.2" lengthAdjust="spacingAndGlyphs">1.08095</text><rect x="20.5" y="107.5" width="10" height="15" fill="#e04a4a" /><rect x="30.5" y="107.5" width="9.5" height="15" fill="#2f78c8" /><rect x="21.8" y="108.8" width="16.9" height="12.4" fill="#ffffff" /><rect x="23.1" y="110.5" width="6.6" height="2.2" fill="#e85050" /><rect x="31.1" y="110.5" width="6.4" height="2.2" fill="#3a82d0" /><rect x="23.1" y="114.3" width="6.6" height="2.2" fill="#e85050" /><rect x="31.1" y="114.3" width="6.4" height="2.2" fill="#3a82d0" /><rect x="23.1" y="118.1" width="6.6" height="2.2" fill="#e85050" /><rect x="31.1" y="118.1" width="6.4" height="2.2" fill="#3a82d0" /><path d="M49 107.5 h6.5 v5.5 h4 v9.5 h-10.5 z" fill="#e04a4a"/><path d="M50.4 108.9 h3.7 v5.5 h4 v6.7 h-7.7 z" fill="#ffd0c8"/><path d="M70 107.5 h-6.5 v5.5 h-4 v9.5 h10.5 z" fill="#2f78c8"/><path d="M68.6 108.9 h-3.7 v5.5 h-4 v6.7 h7.7 z" fill="#c4e4ff"/><rect x="56.5" y="107.8" width="6" height="3.9" fill="#404040" /><rect x="57.8" y="109" width="3.4" height="1.4" fill="#e8e8e8" /><text x="77" y="120" font-size="13.9" fill="#ffffff" stroke="#ffffff" stroke-width="0.12" textLength="193" lengthAdjust="spacingAndGlyphs">EURUSD, H1:&#160; Euro vs US Dollar</text><defs><linearGradient id="rg1" x1="0" y1="0" x2="0" y2="1"><stop offset="0" stop-color="#f84c4e"/><stop offset="1" stop-color="#d82226"/></linearGradient><linearGradient id="rg2" x1="0" y1="0" x2="0" y2="1"><stop offset="0" stop-color="#d92428"/><stop offset="0.6" stop-color="#c41216"/><stop offset="1" stop-color="#ae0000"/></linearGradient><linearGradient id="sg" x1="0" y1="0" x2="0" y2="1"><stop offset="0" stop-color="#f4f4f4"/><stop offset="1" stop-color="#d4d4d4"/></linearGradient></defs><rect x="19" y="129" width="59.5" height="31.5" fill="url(#rg1)" /><rect x="215" y="129" width="59" height="31.5" fill="url(#rg1)" /><rect x="19" y="160" width="126.8" height="46.5" fill="url(#rg2)" /><rect x="148.6" y="160" width="125.4" height="46.5" fill="url(#rg2)" /><rect x="78.5" y="129" width="136.5" height="30" fill="#000" /><rect x="81.6" y="129.5" width="129.4" height="26.8" fill="url(#sg)" /><rect x="108.5" y="129.5" width="75.7" height="26.8" fill="#ffffff" /><line x1="108.3" y1="129.5" x2="108.3" y2="156.3" stroke="#b8b8b8" stroke-width="0.8" /><line x1="184.4" y1="129.5" x2="184.4" y2="156.3" stroke="#b8b8b8" stroke-width="0.8" /><path d="M91 141.3 h7.2 l-3.6 4 z" fill="#101010"/><path d="M194 144.6 h7.2 l-3.6 -4 z" fill="#101010"/><text x="178" y="148.3" font-size="14.6" fill="#1a1a3a" stroke="#1a1a3a" stroke-width="0.3" textLength="28.5" lengthAdjust="spacingAndGlyphs" text-anchor="end">0.01</text><line x1="24" y1="159.6" x2="73.5" y2="159.6" stroke="#9c1010" stroke-width="1.2" /><line x1="220" y1="159.6" x2="269" y2="159.6" stroke="#9c1010" stroke-width="1.2" /><text x="31" y="149.6" font-size="15.6" fill="#ffe9dc" stroke="#ffe9dc" stroke-width="0.3" textLength="33" lengthAdjust="spacingAndGlyphs">SELL</text><text x="228" y="149.6" font-size="15.6" fill="#ffe9dc" stroke="#ffe9dc" stroke-width="0.3" textLength="30" lengthAdjust="spacingAndGlyphs">BUY</text><text x="38" y="198.6" font-size="15.8" fill="#ffffff" stroke="#ffffff" stroke-width="0.3" font-weight="bold" textLength="31" lengthAdjust="spacingAndGlyphs">1.08</text><text x="166.3" y="198.6" font-size="15.8" fill="#ffffff" stroke="#ffffff" stroke-width="0.3" font-weight="bold" textLength="31" lengthAdjust="spacingAndGlyphs">1.08</text><text x="75" y="198.8" font-size="41.8" fill="#ffffff" stroke="#ffffff" stroke-width="0.4" textLength="44.6" lengthAdjust="spacingAndGlyphs">88</text><text x="204" y="198.8" font-size="41.8" fill="#ffffff" stroke="#ffffff" stroke-width="0.4" textLength="44.6" lengthAdjust="spacingAndGlyphs">88</text><text x="124.3" y="180.6" font-size="16.6" fill="#ffffff" stroke="#ffffff" stroke-width="0.3" textLength="9.4" lengthAdjust="spacingAndGlyphs">2</text><text x="253.6" y="180.6" font-size="16.6" fill="#ffffff" stroke="#ffffff" stroke-width="0.3" textLength="9.4" lengthAdjust="spacingAndGlyphs">4</text><path d="M14 1307.5 V746.5 H1421.6 V1307.5 H14" fill="none" stroke="#ffffff" stroke-width="1.35"/><line x1="1421.6" y1="781.5" x2="1427.4" y2="781.5" stroke="#ffffff" stroke-width="1.3" /><text x="1429.6" y="786.2" font-size="12.9" fill="#ffffff" stroke="#ffffff" stroke-width="0.3" textLength="43.2" lengthAdjust="spacingAndGlyphs">0.67950</text><line x1="1421.6" y1="826.5" x2="1427.4" y2="826.5" stroke="#ffffff" stroke-width="1.3" /><text x="1429.6" y="831.2" font-size="12.9" fill="#ffffff" stroke="#ffffff" stroke-width="0.3" textLength="43.2" lengthAdjust="spacingAndGlyphs">0.67865</text><line x1="1421.6" y1="871.5" x2="1427.4" y2="871.5" stroke="#ffffff" stroke-width="1.3" /><text x="1429.6" y="876.2" font-size="12.9" fill="#ffffff" stroke="#ffffff" stroke-width="0.3" textLength="43.2" lengthAdjust="spacingAndGlyphs">0.67780</text><rect x="20.5" y="754" width="10" height="15" fill="#e04a4a" /><rect x="30.5" y="754" width="9.5" height="15" fill="#2f78c8" /><rect x="21.8" y="755.3" width="16.9" height="12.4" fill="#ffffff" /><rect x="23.1" y="757" width="6.6" height="2.2" fill="#e85050" /><rect x="31.1" y="757" width="6.4" height="2.2" fill="#3a82d0" /><rect x="23.1" y="760.8" width="6.6" height="2.2" fill="#e85050" /><rect x="31.1" y="760.8" width="6.4" height="2.2" fill="#3a82d0" /><rect x="23.1" y="764.6" width="6.6" height="2.2" fill="#e85050" /><rect x="31.1" y="764.6" width="6.4" height="2.2" fill="#3a82d0" /><path d="M49 754 h6.5 v5.5 h4 v9.5 h-10.5 z" fill="#e04a4a"/><path d="M50.4 755.4 h3.7 v5.5 h4 v6.7 h-7.7 z" fill="#ffd0c8"/><path d="M70 754 h-6.5 v5.5 h-4 v9.5 h10.5 z" fill="#2f78c8"/><path d="M68.6 755.4 h-3.7 v5.5 h-4 v6.7 h7.7 z" fill="#c4e4ff"/><rect x="56.5" y="754.3" width="6" height="3.9" fill="#404040" /><rect x="57.8" y="755.5" width="3.4" height="1.4" fill="#e8e8e8" /><text x="77" y="766.5" font-size="13.9" fill="#ffffff" stroke="#ffffff" stroke-width="0.12" textLength="272.5" lengthAdjust="spacingAndGlyphs">AUDUSD, H1:&#160; Australian Dollar vs US Dollar</text><rect x="19" y="775.5" width="59.5" height="31.5" fill="url(#rg1)" /><rect x="215" y="775.5" width="59" height="31.5" fill="url(#rg1)" /><rect x="19" y="806.5" width="126.8" height="46.5" fill="url(#rg2)" /><rect x="148.6" y="806.5" width="125.4" height="46.5" fill="url(#rg2)" /><rect x="78.5" y="775.5" width="136.5" height="30" fill="#000" /><rect x="81.6" y="776" width="129.4" height="26.8" fill="url(#sg)" /><rect x="108.5" y="776" width="75.7" height="26.8" fill="#ffffff" /><line x1="108.3" y1="776" x2="108.3" y2="802.8" stroke="#b8b8b8" stroke-width="0.8" /><line x1="184.4" y1="776" x2="184.4" y2="802.8" stroke="#b8b8b8" stroke-width="0.8" /><path d="M91 787.8 h7.2 l-3.6 4 z" fill="#101010"/><path d="M194 791.1 h7.2 l-3.6 -4 z" fill="#101010"/><line x1="24" y1="806.1" x2="73.5" y2="806.1" stroke="#9c1010" stroke-width="1.2" /><line x1="220" y1="806.1" x2="269" y2="806.1" stroke="#9c1010" stroke-width="1.2" /><text x="31" y="796.1" font-size="15.6" fill="#ffe9dc" stroke="#ffe9dc" stroke-width="0.3" textLength="33" lengthAdjust="spacingAndGlyphs">SELL</text><text x="228" y="796.1" font-size="15.6" fill="#ffe9dc" stroke="#ffe9dc" stroke-width="0.3" textLength="30" lengthAdjust="spacingAndGlyphs">BUY</text><text x="38" y="845.1" font-size="15.8" fill="#ffffff" stroke="#ffffff" stroke-width="0.3" font-weight="bold" textLength="31" lengthAdjust="spacingAndGlyphs">0.67</text><text x="166.3" y="845.1" font-size="15.8" fill="#ffffff" stroke="#ffffff" stroke-width="0.3" font-weight="bold" textLength="31" lengthAdjust="spacingAndGlyphs">0.67</text><text x="75" y="845.3" font-size="41.8" fill="#ffffff" stroke="#ffffff" stroke-width="0.4" textLength="44.6" lengthAdjust="spacingAndGlyphs">00</text><text x="204" y="845.3" font-size="41.8" fill="#ffffff" stroke="#ffffff" stroke-width="0.4" textLength="44.6" lengthAdjust="spacingAndGlyphs">00</text><text x="124.3" y="827.1" font-size="16.6" fill="#ffffff" stroke="#ffffff" stroke-width="0.3" textLength="9.4" lengthAdjust="spacingAndGlyphs">4</text><text x="253.6" y="827.1" font-size="16.6" fill="#ffffff" stroke="#ffffff" stroke-width="0.3" textLength="9.4" lengthAdjust="spacingAndGlyphs">5</text><rect x="1424.8" y="325.8" width="53.2" height="14.5" fill="#8495ab" /><text x="1429.6" y="337.7" font-size="12.9" fill="#000000" stroke="#000000" stroke-width="0.3" textLength="43.2" lengthAdjust="spacingAndGlyphs">1.08882</text><text x="14" y="677.8" font-size="12.9" fill="#ffffff" stroke="#ffffff" stroke-width="0.3" textLength="57" lengthAdjust="spacingAndGlyphs">4 Jul 2024</text><text x="101.06" y="677.8" font-size="12.9" fill="#ffffff" stroke="#ffffff" stroke-width="0.3" textLength="60" lengthAdjust="spacingAndGlyphs">5 Jul 08:00</text><text x="188.32" y="677.8" font-size="12.9" fill="#ffffff" stroke="#ffffff" stroke-width="0.3" textLength="60" lengthAdjust="spacingAndGlyphs">8 Jul 00:00</text><text x="1236.63" y="677.8" font-size="12.9" fill="#ffffff" stroke="#ffffff" stroke-width="0.3" textLength="66.5" lengthAdjust="spacingAndGlyphs">18 Jul 01:00</text><text x="1323.89" y="677.8" font-size="12.9" fill="#ffffff" stroke="#ffffff" stroke-width="0.3" textLength="66.5" lengthAdjust="spacingAndGlyphs">18 Jul 17:00</text><text x="1411.15" y="677.8" font-size="12.9" fill="#ffffff" stroke="#ffffff" stroke-width="0.3" textLength="66.5" lengthAdjust="spacingAndGlyphs">19 Jul 09:00</text><text x="1149.37" y="677.8" font-size="12.9" fill="#ffffff" stroke="#ffffff" stroke-width="0.3" textLength="66.5" lengthAdjust="spacingAndGlyphs">17 Jul 09:00</text><line x1="14.4" y1="661" x2="14.4" y2="666.5" stroke="#ffffff" stroke-width="1.3" /><line x1="101.66" y1="661" x2="101.66" y2="666.5" stroke="#ffffff" stroke-width="1.3" /><line x1="188.92" y1="661" x2="188.92" y2="666.5" stroke="#ffffff" stroke-width="1.3" /><line x1="276.18" y1="661" x2="276.18" y2="666.5" stroke="#ffffff" stroke-width="1.3" /><line x1="363.44" y1="661" x2="363.44" y2="666.5" stroke="#ffffff" stroke-width="1.3" /><line x1="450.7" y1="661" x2="450.7" y2="666.5" stroke="#ffffff" stroke-width="1.3" /><line x1="537.96" y1="661" x2="537.96" y2="666.5" stroke="#ffffff" stroke-width="1.3" /><line x1="625.21" y1="661" x2="625.21" y2="666.5" stroke="#ffffff" stroke-width="1.3" /><line x1="712.47" y1="661" x2="712.47" y2="666.5" stroke="#ffffff" stroke-width="1.3" /><line x1="799.73" y1="661" x2="799.73" y2="666.5" stroke="#ffffff" stroke-width="1.3" /><line x1="886.99" y1="661" x2="886.99" y2="666.5" stroke="#ffffff" stroke-width="1.3" /><line x1="974.25" y1="661" x2="974.25" y2="666.5" stroke="#ffffff" stroke-width="1.3" /><line x1="1061.51" y1="661" x2="1061.51" y2="666.5" stroke="#ffffff" stroke-width="1.3" /><line x1="1148.77" y1="661" x2="1148.77" y2="666.5" stroke="#ffffff" stroke-width="1.3" /><line x1="1236.03" y1="661" x2="1236.03" y2="666.5" stroke="#ffffff" stroke-width="1.3" /><line x1="1323.29" y1="661" x2="1323.29" y2="666.5" stroke="#ffffff" stroke-width="1.3" /><line x1="1410.55" y1="661" x2="1410.55" y2="666.5" stroke="#ffffff" stroke-width="1.3" /><rect x="1194" y="639.3" width="13" height="17.7" fill="#f4f4f4" /><text x="1195.5" y="652.1" font-size="12.9" fill="#202020" stroke="#202020" stroke-width="0.3" textLength="9" lengthAdjust="spacingAndGlyphs">6:</text><rect x="1209.6" y="639.3" width="2.2" height="17.7" fill="#f4f4f4" /><path d="M1250 639.3 H1279.6 L1284.6 648.15 L1279.6 657 H1250 z" fill="#f4f4f4"/><text x="1254.4" y="652.1" font-size="12.9" fill="#202020" stroke="#202020" stroke-width="0.3" textLength="24" lengthAdjust="spacingAndGlyphs">3:00</text><path d="M1213.5 639.3 H1244.5 Q1250.5 639.3 1250.5 648.15 Q1250.5 657 1244.5 657 H1213.5 z" fill="#f4f4f4"/><text x="1216" y="652.1" font-size="12.9" fill="#202020" stroke="#202020" stroke-width="0.3" textLength="30" lengthAdjust="spacingAndGlyphs">21:00</text><path d="M1244.5 639.3 Q1250.5 639.3 1250.5 648.15 Q1250.5 657 1244.5 657" fill="none" stroke="#303030" stroke-width="0.9"/><rect x="1296" y="639.3" width="14.3" height="17.7" fill="#f4f4f4" /><text x="1298" y="652.1" font-size="12.9" fill="#202020" stroke="#202020" stroke-width="0.3" textLength="12" lengthAdjust="spacingAndGlyphs">12</text><rect x="1312" y="639.3" width="9" height="17.7" fill="#f4f4f4" /><text x="1314" y="652.1" font-size="12.9" fill="#202020" stroke="#202020" stroke-width="0.3" textLength="5.5" lengthAdjust="spacingAndGlyphs">1</text><rect x="1322.3" y="639.3" width="3" height="17.7" fill="#b8ecf4" /><rect x="1328" y="639.3" width="10" height="17.7" fill="#f4f4f4" /><text x="1331" y="652.1" font-size="12.9" fill="#202020" stroke="#202020" stroke-width="0.3" textLength="5.5" lengthAdjust="spacingAndGlyphs">1</text><rect x="1340" y="639.3" width="31.5" height="17.7" fill="#f4f4f4" /><text x="1341.5" y="652.1" font-size="12.9" fill="#202020" stroke="#202020" stroke-width="0.3" textLength="30" lengthAdjust="spacingAndGlyphs">20:00</text><path d="M1372.6 639.3 H1401.5 Q1407.5 639.3 1407.5 648.15 Q1407.5 657 1401.5 657 H1372.6 z" fill="#f4f4f4"/><text x="1374.5" y="652.1" font-size="12.9" fill="#202020" stroke="#202020" stroke-width="0.3" textLength="30" lengthAdjust="spacingAndGlyphs">02:45</text><rect x="1411" y="639.3" width="8.5" height="17.7" fill="#b8ecf4" /><text x="1412.5" y="652.1" font-size="12.9" fill="#202020" stroke="#202020" stroke-width="0.3" textLength="6" lengthAdjust="spacingAndGlyphs">0</text><line x1="1194.6" y1="639.3" x2="1194.6" y2="661" stroke="#ffffff" stroke-width="1.2" /><line x1="1210.2" y1="639.3" x2="1210.2" y2="661" stroke="#ffffff" stroke-width="1.2" /><line x1="1214.1" y1="639.3" x2="1214.1" y2="661" stroke="#ffffff" stroke-width="1.2" /><line x1="1296.6" y1="639.3" x2="1296.6" y2="661" stroke="#ffffff" stroke-width="1.2" /><line x1="1312.6" y1="639.3" x2="1312.6" y2="661" stroke="#ffffff" stroke-width="1.2" /><line x1="1328.6" y1="639.3" x2="1328.6" y2="661" stroke="#ffffff" stroke-width="1.2" /><line x1="1340.6" y1="639.3" x2="1340.6" y2="661" stroke="#ffffff" stroke-width="1.2" /><line x1="1373.2" y1="639.3" x2="1373.2" y2="661" stroke="#ffffff" stroke-width="1.2" /><line x1="1411.6" y1="639.3" x2="1411.6" y2="661" stroke="#ffffff" stroke-width="1.2" /><rect x="0" y="63" width="1.3" height="775.5" fill="#5c5c5c" /></svg>
<div class="dlg">
<div class="tb"></div>
<span class="t" style="left:12.5px;top:12.29px;font-size:16.2px;color:#1a1a1a;">Order</span>
<svg class="a" style="left:883.9px;top:3.4px" width="165" height="32" viewBox="1020 296 165 32"><path d="M1031.8 312.7 H1045.8" stroke="#151515" stroke-width="1.55" fill="none"/><rect x="1093.9" y="305.6" width="12.6" height="12.6" rx="1.6" fill="none" stroke="#c6c9cc" stroke-width="1.3"/><path d="M1156.4 305.3 L1169.9 318.8 M1169.9 305.3 L1156.4 318.8" stroke="#151515" stroke-width="1.55" fill="none"/></svg>
<svg class="a" style="left:9.9px;top:53.4px" width="422" height="455" viewBox="146 346 422 455" font-family='"Liberation Sans", sans-serif'><rect x="147.3" y="347.3" width="418.3" height="451.5" fill="#ffffff" /><path d="M148.4 798.8 V348.4 H565.6" fill="none" stroke="#a2a2a2" stroke-width="2.1"/><path d="M148.6 798.2 H565 V348.6" fill="none" stroke="#ffffff" stroke-width="1.4"/><line x1="198.33" y1="354" x2="198.33" y2="770" stroke="#dadada" stroke-width="1.2" stroke-dasharray="4.09 4.09"/><line x1="241.96" y1="354" x2="241.96" y2="770" stroke="#dadada" stroke-width="1.2" stroke-dasharray="4.09 4.09"/><line x1="285.59" y1="354" x2="285.59" y2="770" stroke="#dadada" stroke-width="1.2" stroke-dasharray="4.09 4.09"/><line x1="329.22" y1="354" x2="329.22" y2="770" stroke="#dadada" stroke-width="1.2" stroke-dasharray="4.09 4.09"/><line x1="372.85" y1="354" x2="372.85" y2="770" stroke="#dadada" stroke-width="1.2" stroke-dasharray="4.09 4.09"/><line x1="416.48" y1="354" x2="416.48" y2="770" stroke="#dadada" stroke-width="1.2" stroke-dasharray="4.09 4.09"/><line x1="460.11" y1="354" x2="460.11" y2="770" stroke="#dadada" stroke-width="1.2" stroke-dasharray="4.09 4.09"/><line x1="154" y1="395.3" x2="502.5" y2="395.3" stroke="#dadada" stroke-width="1.2" stroke-dasharray="4.09 4.09"/><line x1="154" y1="478.5" x2="502.5" y2="478.5" stroke="#dadada" stroke-width="1.2" stroke-dasharray="4.09 4.09"/><line x1="154" y1="561.7" x2="502.5" y2="561.7" stroke="#dadada" stroke-width="1.2" stroke-dasharray="4.09 4.09"/><line x1="154" y1="644.9" x2="502.5" y2="644.9" stroke="#dadada" stroke-width="1.2" stroke-dasharray="4.09 4.09"/><line x1="154" y1="728.1" x2="502.5" y2="728.1" stroke="#dadada" stroke-width="1.2" stroke-dasharray="4.09 4.09"/><line x1="321.2" y1="354" x2="321.2" y2="770" stroke="#9c9c9c" stroke-width="1.3" stroke-dasharray="4.09 4.09"/><polyline points="153.99,559.53 157.98,553.55 160.97,555.54 162.97,558.54 165.96,545.57 168.95,531.61 171.94,535.6 173.94,529.61 176.93,519.64 177.93,528.61 179.92,519.64 181.92,511.66 184.91,509.66 186.9,499.69 187.5,495.7 189.1,503.68 190.69,495.7 192.29,503.68 194.88,483.73 196.88,485.73 198.87,471.76 199.47,470.76 200.87,478.74 202.26,470.76 203.66,478.74 205.06,470.76 206.45,478.74 209.84,485.73 212.84,478.74 213.83,471.76 214.43,470.76 215.76,478.74 217.09,470.76 218.42,478.74 219.75,470.76 221.08,478.74 222.41,470.76 223.74,478.74 225.07,470.76 226.4,478.74 227.4,463.78 228.8,449.82 230.79,444.83 232.78,447.82 235.78,444.83 236.38,452.81 237.77,437.85 240.76,436.85 242.76,443.83 245.75,437.85 246.75,444.83 248.14,411.92 248.74,411.92 250.06,419.9 251.39,411.92 252.71,419.9 254.03,411.92 255.35,419.9 256.67,411.92 257.99,419.9 259.32,411.92 260.71,412.91 261.71,411.92 262.91,419.9 264.1,413.91 265.3,404.94 266.7,409.92 267.69,411.92 268.69,419.9 270.09,412.91 270.89,419.9 272.08,411.92 273.68,403.94 275.27,404.94 276.47,411.92 277.67,404.94 278.86,409.92 280.06,412.91 281.26,419.9 282.46,412.91 283.65,403.94 285.25,404.94 286.45,409.92 287.64,411.92 289.24,419.9 290,419.9 291,437.85 291.99,444.83 293.99,445.83 294.99,452.81 298.98,453.81 301.97,470.76 303.96,462.78 305.96,454.81 308.95,443.83 309.95,453.81 311.94,466.77 313.94,470.76 314.94,507.67 315.53,545.57 316.93,530.61 318.92,535.6 319.92,519.64 321.92,527.62 321.92,545.57 326.61,594.38 328.83,563.31 330.38,585.5 331.71,603.25 333.27,623.22 334.38,636.53 337.04,654.28 339.92,678.69 342.14,658.72 344.36,654.28 345.47,683.13 347.24,705.31 348.13,719.74 349.46,703.1 352.13,716.41 354.79,738.6 356.12,692 358.34,687.56 361,678.69 363.22,649.84 365.44,636.53 367.66,623.22 370.32,638.75 372.09,649.84 375.42,660.94 377.64,643.19 379.42,625.44 380.89,602.87 382.13,583.36 383.9,574.49 384.97,556.76 386.21,529.27 387.98,542.57 389.76,546.12 392.06,547.89 393.3,567.4 395.96,578.04 397.74,570.95 399.87,553.21 402.17,565.63 403.94,570.95 406.61,586.91 408.02,570.95 410.15,578.04 411.93,556.76 413.7,553.21 415.47,578.04 416.72,594 418.13,570.95 420.79,563.85 422.21,615.29 423.46,645.44 425.23,645.44 426.47,624.16 428.78,620.61 430.55,628.59 432.32,592.23 434.1,585.14 435.87,606.42 437.11,628.59 438.53,617.06 440.31,578.04 442.08,570.06 443.41,578.04 444.74,570.06 446.07,578.04 447.4,570.06 448.73,578.04 450.06,570.06 451.39,578.04 452.72,570.06 454.05,578.04 455.38,570.06 456.71,578.04 458.04,570.06 459.28,583.36 460.7,586.38 502.38,586.38" fill="none" stroke="#1468f4" stroke-width="1.45" stroke-linejoin="miter"/><polyline points="153.99,553.55 158.38,537.59 160.97,545.57 163.96,549.56 166.96,537.59 169.95,513.65 170.55,511.66 172.01,519.64 173.47,511.66 174.94,519.64 176.4,511.66 177.86,519.64 179.32,511.66 179.92,511.66 182.91,497.69 184.91,499.69 186.9,488.72 187.5,488.72 189.1,496.7 190.69,488.72 192.29,496.7 192.89,479.74 195.48,480.74 197.88,471.76 198.87,462.78 199.47,462.78 200.97,470.76 202.46,462.78 203.96,470.76 205.46,462.78 207.85,470.76 210.84,477.75 213.83,462.78 214.43,462.78 215.8,470.76 217.18,462.78 218.55,470.76 219.92,462.78 221.29,470.76 222.66,462.78 224.03,470.76 225.4,462.78 226.8,459.79 227.8,437.85 231.79,435.85 233.78,428.87 236.18,433.86 239.17,420.89 242.76,429.87 244.75,433.86 247.15,427.88 248.34,404.94 248.94,403.94 250.28,411.92 251.62,403.94 252.96,411.92 254.3,403.94 255.64,411.92 256.98,403.94 258.32,411.92 259.71,401.94 260.71,395.96 262.11,395.96 263.31,402.94 265.1,395.96 266.7,396.96 267.69,404.94 269.69,403.94 270.69,405.93 272.08,399.95 273.28,395.96 274.88,401.94 276.27,395.96 277.67,399.95 279.06,395.96 280.66,401.94 282.06,404.94 283.25,397.95 284.65,387.98 285.65,385.98 286.84,393.96 287.64,397.95 289.24,411.92 290,409.92 291.99,419.9 292.99,437.85 294.99,429.87 295.98,441.84 298.38,436.85 299.97,445.83 302.37,451.81 304.36,445.83 305.96,428.87 308.95,437.85 311.54,445.83 313.54,459.79 314.94,483.73 315.53,511.66 317.53,519.64 319.92,502.68 321.92,509.66 322.91,529.61 323.51,539.59 325.5,569.97 328.83,550 331.05,558.88 332.16,589.94 333.27,621 335.48,638.75 339.26,665.38 342.81,636.53 345.03,649.84 345.91,678.69 348.13,692 350.35,705.31 353.23,716.41 354.79,714.19 355.9,676.47 358.78,669.81 361.44,660.94 362.78,634.31 364.99,621 367.21,618.78 368.32,604.36 369.88,616.56 371.65,634.31 374.31,643.19 376.98,632.09 378.75,625.44 380.53,599.33 381.77,570.95 383.55,565.63 384.43,540.79 385.32,519.51 387.09,528.38 388.51,519.51 390.29,528.38 392.06,530.15 392.77,551.44 394.19,562.08 395.96,553.21 397.74,561.19 399.16,546.12 401.28,546.12 402.7,553.21 404.83,553.21 406.61,570.95 408.38,567.4 409.27,553.21 411.04,544.34 413.7,537.25 415.47,544.34 416.36,562.08 418.13,545.23 420.79,551.44 421.68,592.23 422.57,615.29 424.34,620.61 427,604.65 428.78,611.74 431.08,611.74 432.32,570.06 434.1,579.82 435.87,586.91 437.11,606.42 438.53,613.52 439.42,567.4 441.19,545.23 442.43,562.08 444.21,553.21 446.51,562.08 447.75,570.06 450.06,558.53 450.95,553.21 452.37,562.08 453.79,553.21 455.2,562.08 456.62,553.21 458.04,562.08 458.93,570.06 502.38,570.06" fill="none" stroke="#f46060" stroke-width="1.45" stroke-linejoin="miter"/><path d="M153.3 353.4 H502.7 V770.2 H153.3 z" fill="none" stroke="#000" stroke-width="1.35"/><line x1="502.7" y1="395.3" x2="505" y2="395.3" stroke="#000" stroke-width="1.2" /><line x1="502.7" y1="478.5" x2="505" y2="478.5" stroke="#000" stroke-width="1.2" /><line x1="502.7" y1="561.7" x2="505" y2="561.7" stroke="#000" stroke-width="1.2" /><line x1="502.7" y1="644.9" x2="505" y2="644.9" stroke="#000" stroke-width="1.2" /><line x1="502.7" y1="728.1" x2="505" y2="728.1" stroke="#000" stroke-width="1.2" /><line x1="154.7" y1="770.2" x2="154.7" y2="774.2" stroke="#000" stroke-width="1.2" /><line x1="198.33" y1="770.2" x2="198.33" y2="774.2" stroke="#000" stroke-width="1.2" /><line x1="241.96" y1="770.2" x2="241.96" y2="774.2" stroke="#000" stroke-width="1.2" /><line x1="285.59" y1="770.2" x2="285.59" y2="774.2" stroke="#000" stroke-width="1.2" /><line x1="329.22" y1="770.2" x2="329.22" y2="774.2" stroke="#000" stroke-width="1.2" /><line x1="372.85" y1="770.2" x2="372.85" y2="774.2" stroke="#000" stroke-width="1.2" /><line x1="416.48" y1="770.2" x2="416.48" y2="774.2" stroke="#000" stroke-width="1.2" /><line x1="460.11" y1="770.2" x2="460.11" y2="774.2" stroke="#000" stroke-width="1.2" /><text x="157" y="367.6" font-size="12.6" fill="#1a1a1a" stroke="#1a1a1a" stroke-width="0.3" textLength="53" lengthAdjust="spacingAndGlyphs">EURUSD</text><text x="510" y="400.2" font-size="12.9" fill="#1a1a1a" stroke="#1a1a1a" stroke-width="0.3" textLength="44.6" lengthAdjust="spacingAndGlyphs">1.08905</text><text x="510" y="483.4" font-size="12.9" fill="#1a1a1a" stroke="#1a1a1a" stroke-width="0.3" textLength="44.6" lengthAdjust="spacingAndGlyphs">1.08895</text><text x="510" y="566.6" font-size="12.9" fill="#1a1a1a" stroke="#1a1a1a" stroke-width="0.3" textLength="44.6" lengthAdjust="spacingAndGlyphs">1.08885</text><text x="510" y="649.8" font-size="12.9" fill="#1a1a1a" stroke="#1a1a1a" stroke-width="0.3" textLength="44.6" lengthAdjust="spacingAndGlyphs">1.08875</text><text x="510" y="733" font-size="12.9" fill="#1a1a1a" stroke="#1a1a1a" stroke-width="0.3" textLength="44.6" lengthAdjust="spacingAndGlyphs">1.08865</text><line x1="459.6" y1="570" x2="503" y2="570" stroke="#fa6262" stroke-width="1.4" /><rect x="504.4" y="563.2" width="55.8" height="14.2" fill="#fc6565" /><text x="510" y="575" font-size="12.9" fill="#ffffff" stroke="#ffffff" stroke-width="0.3" textLength="44.6" lengthAdjust="spacingAndGlyphs">1.08884</text><rect x="504.4" y="579.4" width="55.8" height="14.6" fill="#1565fa" /><text x="510" y="591.2" font-size="12.9" fill="#ffffff" stroke="#ffffff" stroke-width="0.3" textLength="44.6" lengthAdjust="spacingAndGlyphs">1.08882</text><text x="155" y="787.4" font-size="12.9" fill="#1a1a1a" stroke="#1a1a1a" stroke-width="0.3" textLength="62" lengthAdjust="spacingAndGlyphs">2024.07.19</text><text x="241" y="787.4" font-size="12.9" fill="#1a1a1a" stroke="#1a1a1a" stroke-width="0.3" textLength="31.5" lengthAdjust="spacingAndGlyphs">08:58</text><text x="285" y="787.4" font-size="12.9" fill="#1a1a1a" stroke="#1a1a1a" stroke-width="0.3" textLength="31.5" lengthAdjust="spacingAndGlyphs">08:59</text><text x="328.4" y="787.4" font-size="12.9" fill="#1a1a1a" stroke="#1a1a1a" stroke-width="0.3" textLength="31.5" lengthAdjust="spacingAndGlyphs">09:00</text><text x="372" y="787.4" font-size="12.9" fill="#1a1a1a" stroke="#1a1a1a" stroke-width="0.3" textLength="31.5" lengthAdjust="spacingAndGlyphs">09:00</text><text x="415.8" y="787.4" font-size="12.9" fill="#1a1a1a" stroke="#1a1a1a" stroke-width="0.3" textLength="31.5" lengthAdjust="spacingAndGlyphs">09:01</text><text x="459.4" y="787.4" font-size="12.9" fill="#1a1a1a" stroke="#1a1a1a" stroke-width="0.3" textLength="49" lengthAdjust="spacingAndGlyphs">09:02:14</text></svg>
<span class="t" style="left:521.5px;top:60.65px;font-size:15.3px;transform:scaleX(0.9300);">Symbol:</span>
<span class="t" style="left:535.5px;top:98.95px;font-size:15.3px;">Type:</span>
<span class="t" style="left:521.9px;top:165.45px;font-size:15.3px;transform:scaleX(0.9225);">Volume:</span>
<span class="t" style="left:505.5px;top:202.45px;font-size:15.3px;transform:scaleX(0.9323);">Stop Loss:</span>
<span class="t" style="left:506.5px;top:240.45px;font-size:15.3px;transform:scaleX(0.9409);">Comment:</span>
<span class="t" style="left:506.5px;top:277.85px;font-size:15.3px;transform:scaleX(0.9760);">Deviation:</span>
<span class="t" style="left:803.9px;top:202.15px;font-size:15.3px;transform:scaleX(0.9892);">Take Profit:</span>
<div class="a " style="left:583.9px;top:54.7px;width:440px;height:28.3px;background:#fff;border:1.7px solid #0a78d4;border-radius:3.5px;"></div>
<div class="a " style="left:591.3px;top:59.1px;width:178.2px;height:17px;background:#0078d7;"></div>
<span class="t" style="left:591.7px;top:60.75px;font-size:15.3px;transform:scaleX(0.8968);color:#ffffff;">EURUSD, Euro vs US Dollar</span>
<div class="a " style="left:583.9px;top:94.9px;width:440px;height:27.1px;background:linear-gradient(#ffffff,#f6f6f6);border:1.2px solid #d6d6d6;border-bottom-color:#c4c4c4;border-radius:3px;"></div>
<span class="t" style="left:588.5px;top:101.45px;font-size:15.3px;transform:scaleX(0.9832);">Instant Execution</span>
<svg class="a" style="left:1004.1px;top:64.6px" width="15.6" height="10" viewBox="1140.2 357.2 15.6 10"><path d="M1142.2 359.2 L1148 365.2 L1153.8 359.2" fill="none" stroke="#484848" stroke-width="1.2"/></svg>
<svg class="a" style="left:1004.1px;top:104px" width="15.6" height="10" viewBox="1140.2 396.6 15.6 10"><path d="M1142.2 398.6 L1148 404.6 L1153.8 398.6" fill="none" stroke="#484848" stroke-width="1.2"/></svg>
<div class="a inp" style="left:584.5px;top:159.6px;width:108.4px;height:25.1px;"></div>
<span class="t" style="left:655.5px;top:164.85px;font-size:15.3px;transform:scaleX(0.9873);">0.00</span>
<div class="a spn" style="left:695.9px;top:160.3px;width:19.7px;height:12.5px;"></div>
<div class="a spn" style="left:695.9px;top:171.6px;width:19.7px;height:12.5px;"></div>
<svg class="a" style="left:695.9px;top:160.3px" width="19.7" height="23.8" viewBox="832 452.9 19.7 23.8"><path d="M838.15 460.8 L841.85 456.6 L845.55 460.8 z" fill="#111"/><path d="M838.15 468.8 L841.85 473 L845.55 468.8 z" fill="#111"/></svg>
<span class="t" style="left:726.5px;top:165.45px;font-size:15.3px;transform:scaleX(0.8521);">0 EUR</span>
<div class="a inp" style="left:584.5px;top:197.8px;width:108.4px;height:25.4px;"></div>
<span class="t" style="left:630.9px;top:202.45px;font-size:15.3px;transform:scaleX(0.9764);">0.00000</span>
<div class="a spn" style="left:695.9px;top:198.7px;width:19.7px;height:12.3px;"></div>
<div class="a spn" style="left:695.9px;top:209.8px;width:19.7px;height:12.3px;"></div>
<svg class="a" style="left:695.9px;top:198.7px" width="19.7" height="23.4" viewBox="832 491.3 19.7 23.4"><path d="M838.15 499.2 L841.85 495 L845.55 499.2 z" fill="#111"/><path d="M838.15 506.8 L841.85 511 L845.55 506.8 z" fill="#111"/></svg>
<div class="a inp" style="left:891.5px;top:197.8px;width:108.4px;height:25.4px;"></div>
<span class="t" style="left:937.5px;top:202.45px;font-size:15.3px;transform:scaleX(0.9872);">0.00000</span>
<div class="a spn" style="left:1002.7px;top:198.7px;width:19.8px;height:12.3px;"></div>
<div class="a spn" style="left:1002.7px;top:209.8px;width:19.8px;height:12.3px;"></div>
<svg class="a" style="left:1002.7px;top:198.7px" width="19.8" height="23.4" viewBox="1138.8 491.3 19.8 23.4"><path d="M1145 499.2 L1148.7 495 L1152.4 499.2 z" fill="#111"/><path d="M1145 506.8 L1148.7 511 L1152.4 506.8 z" fill="#111"/></svg>
<div class="a inp" style="left:584.5px;top:236.2px;width:438.8px;height:25px;"></div>
<div class="a " style="left:584.1px;top:272.2px;width:132.6px;height:27.4px;background:#fff;border:1.25px solid #7c7c7c;border-radius:3.5px;"></div>
<span class="t" style="left:591.3px;top:277.65px;font-size:15.3px;transform:scaleX(0.9167);">0</span>
<svg class="a" style="left:698.5px;top:282px" width="14" height="9.2" viewBox="834.6 574.6 14 9.2"><path d="M836.6 576.6 L841.6 581.8 L846.6 576.6" fill="none" stroke="#606060" stroke-width="1.2"/></svg>
<span class="t" style="left:598.3px;top:335.99px;font-size:36.4px;transform:scaleX(0.9719);-webkit-text-stroke:0;color:#0e0e0e;">1.0888</span>
<span class="t" style="left:708.1px;top:344.29px;font-size:26.6px;transform:scaleX(0.9463);-webkit-text-stroke:0;color:#0e0e0e;">2</span>
<span class="t" style="left:734.5px;top:333.91px;font-size:45px;transform:scaleX(1.0078);-webkit-text-stroke:0;color:#0e0e0e;">/</span>
<span class="t" style="left:760.5px;top:335.99px;font-size:36.4px;transform:scaleX(0.9719);-webkit-text-stroke:0;color:#0e0e0e;">1.0888</span>
<span class="t" style="left:869.5px;top:344.29px;font-size:26.6px;transform:scaleX(1.0139);-webkit-text-stroke:0;color:#0e0e0e;">4</span>
<div class="a btn" style="left:462.5px;top:414.4px;width:263.2px;height:28.9px;"></div>
<div class="a btn" style="left:759.5px;top:414.4px;width:263.6px;height:28.8px;"></div>
<div class="a btn" style="left:462.5px;top:456.6px;width:560.6px;height:28.6px;"></div>
<span class="t" style="left:580.5px;top:421.85px;font-size:15.3px;transform:scaleX(0.9172);color:#767676;-webkit-text-stroke:0.1px;">Sell</span>
<span class="t" style="left:877.1px;top:421.85px;font-size:15.3px;transform:scaleX(0.9672);color:#767676;-webkit-text-stroke:0.1px;">Buy</span>
</div>
<div style="position:absolute;left:0;top:0;width:1500px;height:63px;background:#fff"></div>
<div style="position:absolute;left:0;top:838.5px;width:1500px;height:64px;background:#fff"></div>
</body></html>
